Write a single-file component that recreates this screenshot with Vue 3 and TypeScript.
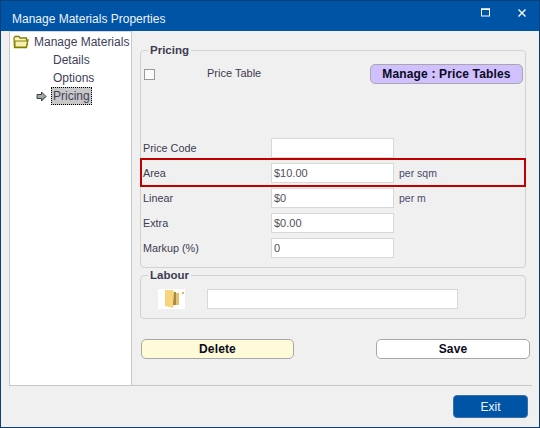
<script setup lang="ts">
interface Row { label: string; value: string; unit?: string; highlight?: boolean }
const rows: Row[] = [
  { label: 'Price Code', value: '' },
  { label: 'Area', value: '$10.00', unit: 'per sqm', highlight: true },
  { label: 'Linear', value: '$0', unit: 'per m' },
  { label: 'Extra', value: '$0.00' },
  { label: 'Markup (%)', value: '0' },
]
</script>

<template>
  <div class="window">
    <header class="titlebar">
      <span class="title">Manage Materials Properties</span>
      <svg class="win-icon max" width="10" height="10" viewBox="0 0 10 10"><rect x="0.5" y="1" width="8" height="7" fill="none" stroke="#fff" /><rect x="0" y="0.5" width="9" height="1.5" fill="#fff" /></svg>
      <svg class="win-icon close" width="10" height="10" viewBox="0 0 10 10"><path d="M1.5 1.5 L8.5 8.5 M8.5 1.5 L1.5 8.5" stroke="#fff" stroke-width="1.4" /></svg>
    </header>

    <div class="content">
      <aside class="tree">
        <div class="node root">
          <svg width="16" height="14" viewBox="0 0 16 14">
            <path d="M1 3 L2 1.5 H6 L7 3 H13.5 V5 H15 L13.5 12.5 H1.5 Z" fill="#fff6c8" stroke="#808000" stroke-width="1.3" />
            <path d="M2 6 H14.5 L13.2 12 H2 Z" fill="#f8f0b0" stroke="#808000" />
          </svg>
          <span>Manage Materials</span>
        </div>
        <div class="node child">Details</div>
        <div class="node child">Options</div>
        <div class="node child selected">
          <svg class="arrow" width="11" height="11" viewBox="0 0 11 11">
            <path d="M1 3.5 H5.5 V1 L10 5.5 L5.5 10 V7.5 H1 Z" fill="#a8a8a8" stroke="#404040" />
            <path d="M6 8.5 L9.5 5.5" stroke="#2f7d2f" />
          </svg>
          <span class="selected-label">Pricing</span>
        </div>
      </aside>

      <main class="main">
        <fieldset class="group pricing">
          <legend>Pricing</legend>
          <div class="price-table">
            <span class="check"></span>
            <span class="pt-label">Price Table</span>
            <button class="btn manage">Manage : Price Tables</button>
          </div>
          <div class="rows">
            <div v-for="row in rows" :key="row.label" class="row" :class="{ hl: row.highlight }">
              <span class="row-label">{{ row.label }}</span>
              <div class="input">{{ row.value }}</div>
              <span v-if="row.unit" class="unit">{{ row.unit }}</span>
            </div>
          </div>
        </fieldset>

        <fieldset class="group labour">
          <legend>Labour</legend>
          <div class="labour-row">
            <div class="folder">
              <svg width="27" height="20" viewBox="0 0 27 20">
                <rect width="27" height="20" fill="#fff" />
                <path d="M7 1 H15 L16 3 V15 L15 19 L7 17 Z" fill="#f6d57e" />
                <path d="M16 3 H18 V16 H15 Z" fill="#a98a45" />
                <path d="M18 4 H21 V16 H18 Z" fill="#e2c271" />
                <rect x="24" y="3" width="2" height="2" fill="#e8b050" />
              </svg>
            </div>
            <div class="input labour-input"></div>
          </div>
        </fieldset>

        <div class="actions">
          <button class="btn delete">Delete</button>
          <button class="btn save">Save</button>
        </div>
      </main>
    </div>

    <footer class="footer">
      <button class="exit">Exit</button>
    </footer>
  </div>
</template>

<style>
html, body { margin: 0; padding: 0; }
</style>

<style scoped>
.window {
  width: 540px;
  height: 428px;
  box-sizing: border-box;
  display: flex;
  flex-direction: column;
  background: #f0f0f0;
  border: 1px solid #0a3f78;
  font-family: "Liberation Sans", Arial, sans-serif;
  font-size: 12px;
  color: #3c3c50;
}
.titlebar {
  height: 30px;
  flex: none;
  background: #0054a6;
  display: flex;
  align-items: center;
  color: #fff;
  padding-left: 11px;
  position: relative;
}
.title { font-size: 12px; color: #eef3fa; margin-top: 6px; }
.win-icon { position: absolute; top: 7px; }
.max { left: 480px; }
.close { left: 516px; }
.content {
  flex: 1;
  display: flex;
  margin: 0 7px 0 8px;
  border-bottom: 1px solid #c8c8c8;
  min-height: 0;
}
.tree {
  width: 123px;
  flex: none;
  box-sizing: border-box;
  background: #fff;
  border: 1px solid #c8c8c8;
  border-top: 1px solid #d8d8d8;
  border-bottom: 0;
  padding-top: 1px;
}
.node {
  height: 18px;
  line-height: 18px;
  display: flex;
  align-items: center;
  white-space: nowrap;
  color: #40405a;
}
.root { padding-left: 3px; gap: 5px; }
.child { padding-left: 43px; position: relative; }
.selected { padding-left: 41px; }
.arrow { position: absolute; left: 26px; top: 4px; }
.selected-label {
  padding: 0 1px;
  height: 18px;
  line-height: 16px;
  box-sizing: border-box;
  background: #c8c8c8;
  border: 1px dotted #000;
}
.main {
  flex: 1;
  padding-left: 8px;
  display: flex;
  flex-direction: column;
  min-width: 0;
}
.group {
  margin: 0;
  padding: 0;
  border: 1px solid #d2d2d2;
  border-radius: 4px;
  width: 386px;
  box-sizing: border-box;
  min-inline-size: 0;
}
.group legend {
  margin-left: 7px;
  padding: 0 2px;
  font-weight: 700;
  font-size: 11.5px;
  line-height: 14px;
  color: #3c3c50;
}
.pricing { height: 225px; margin-top: 12px; }
.labour { height: 51px; }
.price-table {
  display: flex;
  align-items: flex-start;
  height: 81px;
  font-size: 11px;
}
.check {
  width: 9px;
  height: 9px;
  border: 1px solid #999;
  background: #fbfbfb;
  margin: 12px 0 0 3px;
  flex: none;
}
.pt-label { margin: 10px 0 0 52px; }
.btn {
  font-family: "Liberation Sans", Arial, sans-serif;
  font-size: 12px;
  font-weight: 700;
  letter-spacing: 0.15px;
  color: #0a0a20;
  border: 1px solid #a8a8a8;
  border-radius: 5px;
  padding: 0;
  height: 20px;
}
.manage {
  background: #d0c0ff;
  width: 153px;
  margin-left: auto;
  margin-right: 2px;
  margin-top: 7px;
}
.rows { display: flex; flex-direction: column; gap: 5px; font-size: 10.8px; }
.row {
  display: flex;
  align-items: center;
  height: 20px;
  position: relative;
}
.row-label { width: 130px; padding-left: 2px; box-sizing: border-box; flex: none; }
.input {
  width: 123px;
  height: 20px;
  box-sizing: border-box;
  flex: none;
  background: #fff;
  border: 1px solid #d8d8d8;
  padding-left: 2px;
  line-height: 18px;
  font-size: 11px;
  color: #50505a;
}
.unit { margin-left: 5px; font-size: 10.5px; color: #4a4a6a; }
.hl::after {
  content: "";
  position: absolute;
  left: -1px;
  right: -1px;
  top: -5px;
  bottom: -4px;
  border: 2px solid #c00000;
  pointer-events: none;
}
.labour-row {
  display: flex;
  align-items: center;
  padding-top: 7px;
}
.folder {
  margin-left: 17px;
  height: 20px;
  flex: none;
}
.labour-input {
  width: 251px;
  margin-left: 22px;
}
.actions {
  display: flex;
  justify-content: space-between;
  width: 389px;
  margin: 20px 0 0 1px;
}
.delete { width: 153px; background: #fffbd8; }
.save { width: 154px; background: #fff; }
.footer {
  height: 41px;
  flex: none;
  display: flex;
  justify-content: flex-end;
  align-items: flex-start;
  padding: 9px 11px 0 0;
  box-sizing: border-box;
}
.exit {
  width: 75px;
  height: 23px;
  background: #0054a6;
  color: #f0f4fa;
  border: 1px solid #3a6ea8;
  border-radius: 4px;
  font-family: "Liberation Sans", Arial, sans-serif;
  font-size: 12px;
  padding: 0;
}
</style>
